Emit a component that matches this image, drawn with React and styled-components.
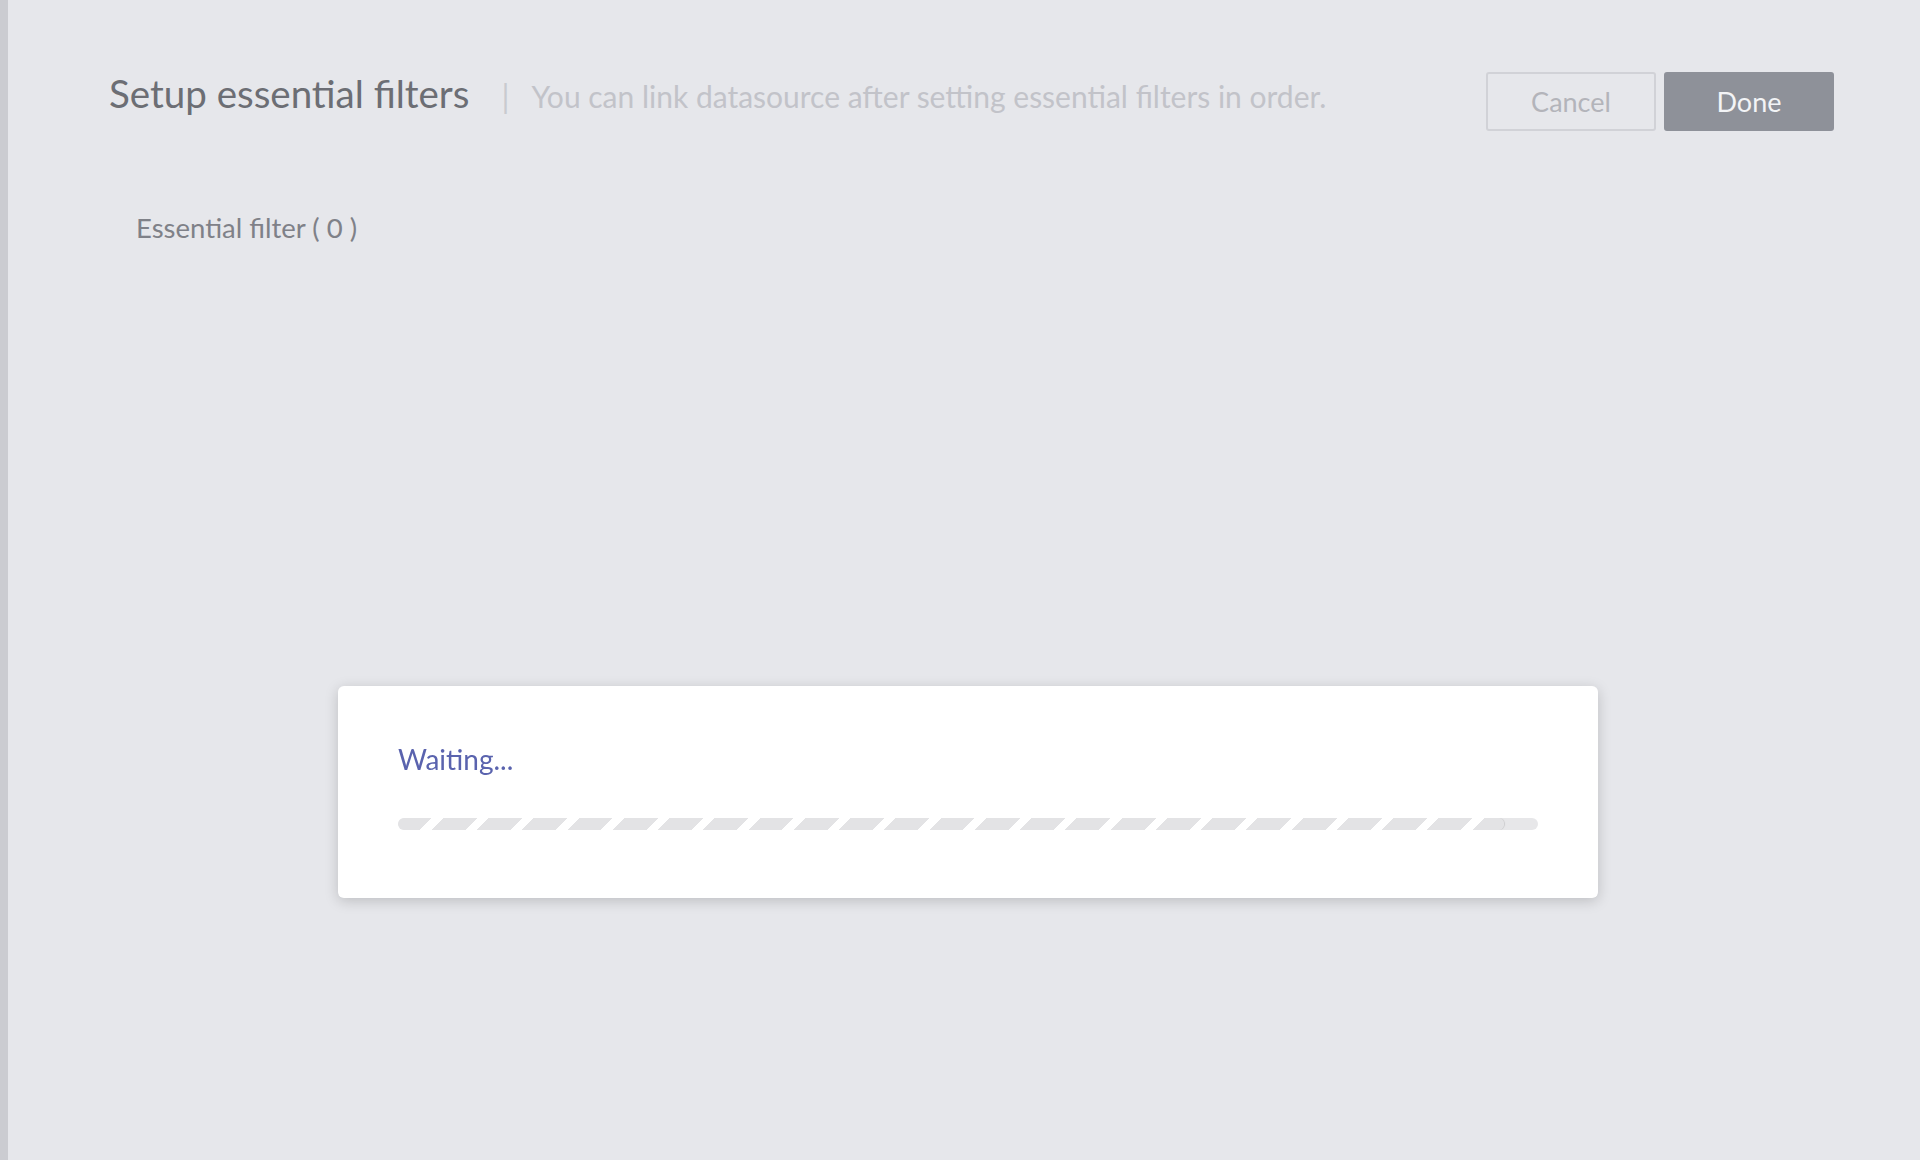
import React from 'react';
import styled, { createGlobalStyle } from 'styled-components';

const GlobalStyle = createGlobalStyle`
  html, body {
    margin: 0;
    padding: 0;
    height: 100%;
  }
  body {
    font-family: Lato, "Open Sans", sans-serif;
    background: #e6e7eb;
  }
  #root {
    height: 100%;
  }
`;

const Page = styled.div`
  display: flex;
  height: 1160px;
  background: #e6e7eb;
  overflow: hidden;
`;

const SideEdge = styled.div`
  width: 8px;
  flex-shrink: 0;
  background: #cbccd1;
`;

const Main = styled.div`
  flex: 1;
  padding: 70px 86px 0 101px;
`;

const Header = styled.div`
  display: flex;
  align-items: baseline;
`;

const Title = styled.h1`
  margin: 0;
  font-size: 38.5px;
  font-weight: 400;
  color: #6c6e74;
`;

const Divider = styled.span`
  margin: 0 22px 0 32px;
  font-size: 32px;
  color: #c9cacf;
`;

const Subtitle = styled.span`
  font-size: 30px;
  color: #c2c3c9;
`;

const Actions = styled.div`
  margin-left: auto;
  margin-top: 2px;
  align-self: flex-start;
  display: flex;
  gap: 8px;
`;

const Button = styled.button`
  width: 170px;
  height: 59px;
  border-radius: 3px;
  font-family: inherit;
  font-size: 27px;
  cursor: pointer;
  border: 2px solid ${p => (p.$primary ? '#8e9199' : '#d1d2d7')};
  background: ${p => (p.$primary ? '#8e9199' : 'transparent')};
  color: ${p => (p.$primary ? '#f3f4f6' : '#b3b4ba')};
`;

const SectionLabel = styled.div`
  margin: 80px 0 0 27px;
  font-size: 27.5px;
  color: #7f8188;
`;

const Overlay = styled.div`
  position: fixed;
  inset: 0;
  display: flex;
  justify-content: center;
  align-items: flex-start;
  padding: 686px 0 0 16px;
`;

const Dialog = styled.div`
  width: 1260px;
  height: 212px;
  box-sizing: border-box;
  padding: 0 60px;
  background: #fff;
  border-radius: 6px;
  box-shadow: 0 3px 14px rgba(0, 0, 0, 0.18);
  display: flex;
  flex-direction: column;
`;

const Waiting = styled.div`
  margin-top: 55px;
  font-size: 28px;
  color: #5a63ae;
  line-height: 36px;
`;

const Track = styled.div`
  margin-top: 41px;
  height: 12px;
  border-radius: 6px;
  background: #e7e7e9;
  overflow: hidden;
`;

const Fill = styled.div`
  height: 100%;
  border-radius: 6px;
  background: repeating-linear-gradient(
    135deg,
    #e3e3e5 0 24px,
    #ffffff 24px 32px
  );
  box-shadow: 1px 0 1px rgba(0, 0, 0, 0.12);
`;

export default function App() {
  const progress = 97;
  return (
    <>
      <GlobalStyle />
      <Page>
        <SideEdge />
        <Main>
          <Header>
            <Title>Setup essential filters</Title>
            <Divider>|</Divider>
            <Subtitle>You can link datasource after setting essential filters in order.</Subtitle>
            <Actions>
              <Button>Cancel</Button>
              <Button $primary>Done</Button>
            </Actions>
          </Header>
          <SectionLabel>Essential filter ( 0 )</SectionLabel>
        </Main>
      </Page>
      <Overlay>
        <Dialog>
          <Waiting>Waiting...</Waiting>
          <Track>
            <Fill style={{ width: `${progress}%` }} />
          </Track>
        </Dialog>
      </Overlay>
    </>
  );
}
